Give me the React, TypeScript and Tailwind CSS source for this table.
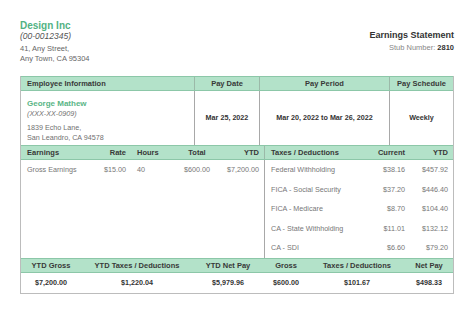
const taxes = [
  { name: "Federal Withholding", current: "$38.16", ytd: "$457.92" },
  { name: "FICA - Social Security", current: "$37.20", ytd: "$446.40" },
  { name: "FICA - Medicare", current: "$8.70", ytd: "$104.40" },
  { name: "CA - State Withholding", current: "$11.01", ytd: "$132.12" },
  { name: "CA - SDI", current: "$6.60", ytd: "$79.20" },
];

const summary = [
  { label: "YTD Gross", value: "$7,200.00" },
  { label: "YTD Taxes / Deductions", value: "$1,220.04" },
  { label: "YTD Net Pay", value: "$5,979.96" },
  { label: "Gross", value: "$600.00" },
  { label: "Taxes / Deductions", value: "$101.67" },
  { label: "Net Pay", value: "$498.33" },
];

const head = "h-[15px] bg-[#b3e2c9] border-y border-[#8cc7a8] text-[7.5px] font-bold text-[#383838]";

export default function App() {
  return (
    <div
      className="w-[474px] h-[314px] bg-white px-[20px] overflow-hidden"
      style={{ fontFamily: '"Liberation Sans", Arial, sans-serif' }}
    >
      {/* company + statement title */}
      <div className="h-[76px] pt-[21px] flex justify-between">
        <div>
          <div className="text-[10px] leading-[10px] font-bold text-[#52b283]">Design Inc</div>
          <div className="text-[8.5px] leading-[10px] italic text-[#555]">(00-0012345)</div>
          <div className="mt-[3px] text-[7.5px] leading-[10px] text-[#666]">
            <div>41, Any Street,</div>
            <div>Any Town, CA 95304</div>
          </div>
        </div>
        <div className="text-right">
          <div className="mt-[9px] text-[9px] leading-[10px] font-bold text-[#333]">Earnings Statement</div>
          <div className="mt-[3px] text-[7.5px] leading-[10px] text-[#888]">
            Stub Number: <span className="font-bold text-[#333]">2810</span>
          </div>
        </div>
      </div>

      <div className="w-[434px] border-x border-b border-[#bcbcbc]">
        {/* employee row */}
        <div className={`grid grid-cols-[173px_65px_130px_64px] items-center ${head}`}>
          <div className="pl-[6px]">Employee Information</div>
          <div className="h-full flex items-center justify-center border-l border-[#9bb9a8]">Pay Date</div>
          <div className="h-full flex items-center justify-center border-l border-[#9bb9a8]">Pay Period</div>
          <div className="h-full flex items-center justify-center border-l border-[#9bb9a8]">Pay Schedule</div>
        </div>
        <div className="h-[54px] grid grid-cols-[173px_65px_130px_64px] text-[7.2px] text-[#707070]">
          <div className="pl-[6px] pt-[8px] leading-[10px]">
            <div className="text-[8px] font-bold text-[#5ab586]">George Mathew</div>
            <div className="italic">(XXX-XX-0909)</div>
            <div className="mt-[4px]">1839 Echo Lane,</div>
            <div>San Leandro, CA 94578</div>
          </div>
          <div className="flex items-center justify-center border-l border-[#a8a8a8] font-bold text-[#333]">Mar 25, 2022</div>
          <div className="flex items-center justify-center border-l border-[#a8a8a8] font-bold text-[#333]">
            Mar 20, 2022 to Mar 26, 2022
          </div>
          <div className="flex items-center justify-center border-l border-[#a8a8a8] font-bold text-[#333]">Weekly</div>
        </div>

        {/* earnings + taxes */}
        <div className={`flex ${head}`}>
          <div className="w-[243px] grid grid-cols-[69px_36px_44px_54px_40px] items-center">
            <div className="pl-[6px]">Earnings</div>
            <div className="text-right">Rate</div>
            <div className="pl-[11px]">Hours</div>
            <div className="text-center">Total</div>
            <div className="text-right pr-[5px]">YTD</div>
          </div>
          <div className="w-[189px] border-l border-[#9bb9a8] grid grid-cols-[90px_50px_48px] items-center">
            <div className="pl-[6px]">Taxes / Deductions</div>
            <div className="text-right">Current</div>
            <div className="text-right pr-[5px]">YTD</div>
          </div>
        </div>
        <div className="h-[98px] flex text-[7.2px] text-[#777]">
          <div className="w-[243px] pt-[1px]">
            <div className="h-[19.5px] grid grid-cols-[69px_36px_44px_54px_40px] items-center">
              <div className="pl-[6px]">Gross Earnings</div>
              <div className="text-right">$15.00</div>
              <div className="pl-[11px]">40</div>
              <div className="text-center">$600.00</div>
              <div className="text-right pr-[5px]">$7,200.00</div>
            </div>
          </div>
          <div className="w-[189px] border-l border-[#a8a8a8] pt-[1px]">
            {taxes.map((t) => (
              <div key={t.name} className="h-[19.5px] grid grid-cols-[90px_50px_48px] items-center">
                <div className="pl-[6px] whitespace-nowrap">{t.name}</div>
                <div className="text-right">{t.current}</div>
                <div className="text-right pr-[5px]">{t.ytd}</div>
              </div>
            ))}
          </div>
        </div>

        {/* totals */}
        <div className={`grid grid-cols-[60px_112px_70px_46px_96px_48px] items-center ${head}`}>
          {summary.map((s) => (
            <div key={s.label} className="text-center whitespace-nowrap">{s.label}</div>
          ))}
        </div>
        <div className="h-[20px] grid grid-cols-[60px_112px_70px_46px_96px_48px] items-center text-[7.2px] font-bold text-[#333]">
          {summary.map((s) => (
            <div key={s.label} className="text-center">{s.value}</div>
          ))}
        </div>
      </div>
    </div>
  );
}
